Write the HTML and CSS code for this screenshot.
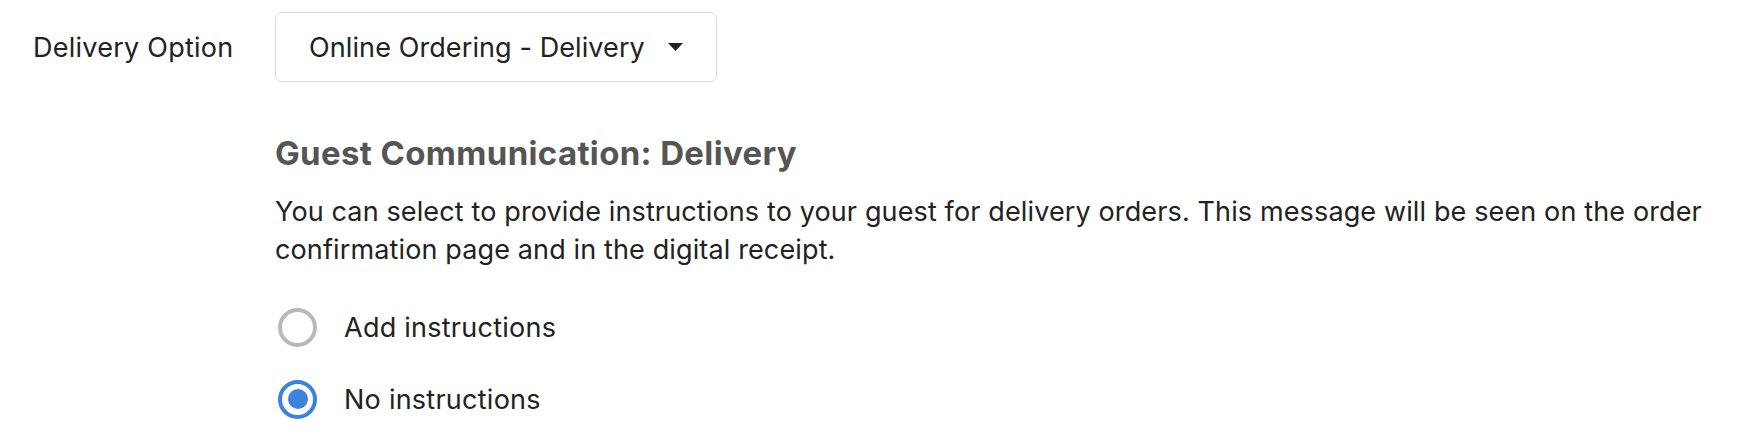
FILE: index.html
```html
<!DOCTYPE html>
<html lang="en">
<head>
<meta charset="utf-8">
<title>Delivery Option</title>
<link rel="stylesheet" href="styles.css">
</head>
<body>
<div class="page">
  <div class="option-row">
    <div class="option-label">Delivery Option</div>
    <button class="select" type="button">
      <span class="select-text">Online Ordering - Delivery</span>
      <svg class="caret" width="15" height="8" viewBox="0 0 15 8"><path d="M0 0H15L7.5 8Z" fill="#222"/></svg>
    </button>
  </div>
  <div class="section">
    <h2 class="section-title">Guest Communication: Delivery</h2>
    <p class="section-text">You can select to provide instructions to your guest for delivery orders. This message will be seen on the order confirmation page and in the digital receipt.</p>
    <div class="radios">
      <label class="radio-row">
        <span class="radio"></span>
        <span class="radio-label">Add instructions</span>
      </label>
      <label class="radio-row">
        <span class="radio radio-checked"></span>
        <span class="radio-label">No instructions</span>
      </label>
    </div>
  </div>
</div>
</body>
</html>
```
FILE: styles.css
```css
html, body {
  margin: 0;
  padding: 0;
  background: #ffffff;
}
body {
  font-family: "Inter", "Liberation Sans", sans-serif;
  font-size: 27px;
  letter-spacing: 0.25px;
  color: #222222;
}
.page {
  padding: 12px 0 0 33px;
}
.option-row {
  display: flex;
  align-items: center;
  height: 70px;
}
.option-label {
  width: 242px;
  flex: none;
  color: #222222;
}
.select {
  display: flex;
  align-items: center;
  box-sizing: border-box;
  width: 442px;
  height: 70px;
  padding: 0 33px 0 33px;
  border: 1.5px solid #dcdce0;
  border-radius: 7px;
  background: #ffffff;
  font: inherit;
  letter-spacing: 0.1px;
  color: #222222;
  cursor: pointer;
}
.select-text {
  flex: 1;
  text-align: left;
}
.caret {
  display: block;
  flex: none;
}
.section {
  margin-left: 242px;
  padding-top: 51px;
}
.section-title {
  margin: 0;
  font-size: 33px;
  font-weight: 700;
  line-height: 40px;
  letter-spacing: 0.35px;
  color: #555555;
}
.section-text {
  margin: 20px 0 0 0;
  max-width: 1445px;
  line-height: 38px;
  letter-spacing: 0.13px;
  color: #222222;
}
.radios {
  display: flex;
  flex-direction: column;
  gap: 32px;
  margin-top: 38px;
}
.radio-row {
  display: flex;
  align-items: center;
  gap: 27px;
  height: 40px;
  cursor: pointer;
}
.radio {
  box-sizing: border-box;
  width: 39px;
  height: 39px;
  margin-left: 3px;
  border: 4px solid #b9b9b9;
  border-radius: 50%;
  background: #ffffff;
  display: flex;
  align-items: center;
  justify-content: center;
}
.radio-checked {
  border-color: #3c83dd;
}
.radio-checked::after {
  content: "";
  width: 20px;
  height: 20px;
  border-radius: 50%;
  background: #3c83dd;
}
.radio-label {
  color: #222222;
}
```
